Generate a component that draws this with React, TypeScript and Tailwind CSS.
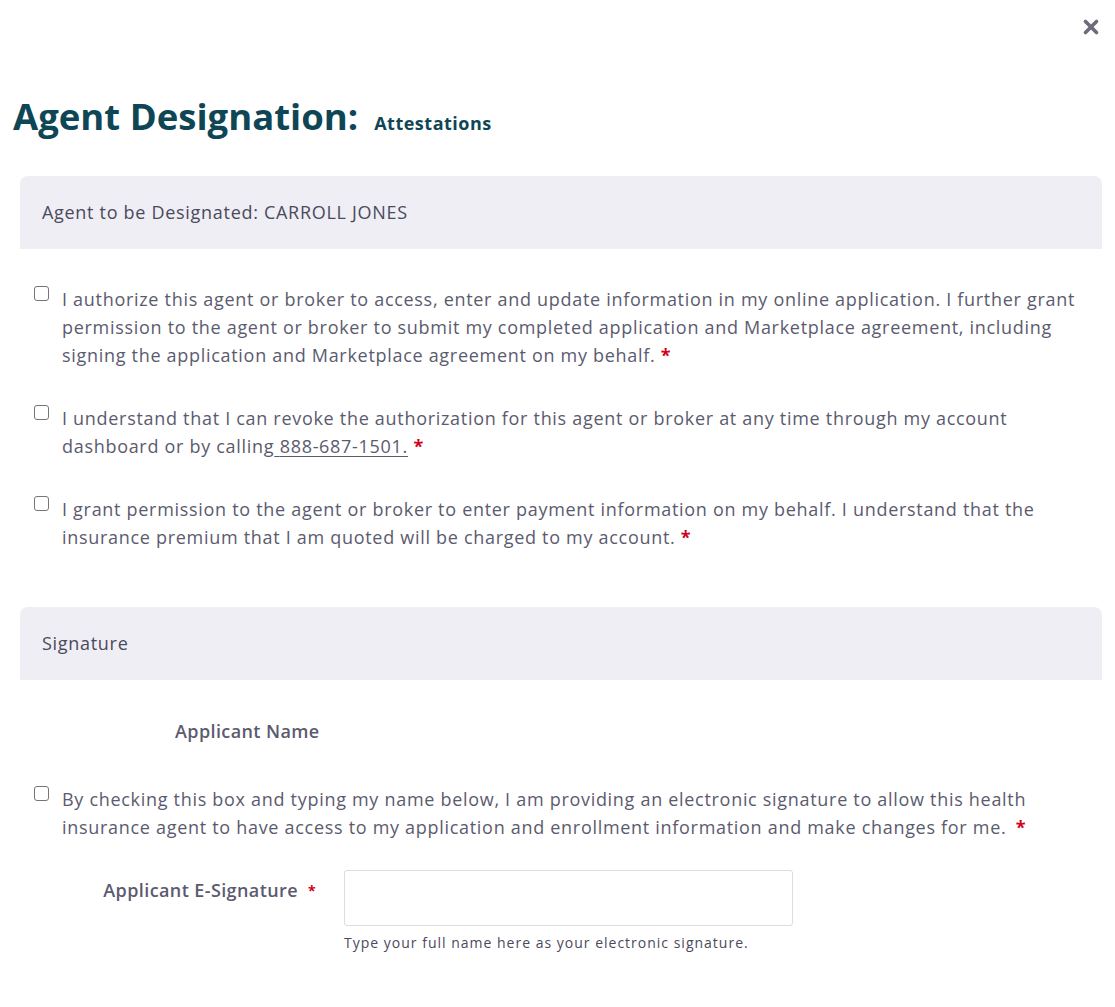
import { X } from "lucide-react";

const font = { fontFamily: '"Open Sans", "Noto Sans", sans-serif' };

function Req({ className = "" }: { className?: string }) {
  return <span className={`text-[#d0021b] font-bold ${className}`}>*</span>;
}

function Box() {
  return (
    <span className="mt-[1px] h-[15px] w-[15px] shrink-0 rounded-[3px] border-[1.5px] border-[#757575] bg-white" />
  );
}

function CheckRow({ children }: { children: React.ReactNode }) {
  return (
    <label className="flex gap-[13px] pl-[34px]">
      <Box />
      <span className="whitespace-nowrap text-[18px] leading-[28px] tracking-[0.7px] text-[#5b5b6f]">{children}</span>
    </label>
  );
}

function PanelHeader({ children }: { children: React.ReactNode }) {
  return (
    <div className="ml-[20px] mr-[13px] flex h-[73px] items-center rounded-t-[8px] bg-[#efeef5] px-[22px] text-[18px] tracking-[0.7px] text-[#4a4a5c]">
      {children}
    </div>
  );
}

export default function App() {
  return (
    <div className="relative h-[1007px] w-[1115px] overflow-hidden bg-white" style={font}>
      <button className="absolute right-[13px] top-[16px] text-[#6c6c7c]" title="Close">
        <X className="h-[22px] w-[22px]" strokeWidth={4} />
      </button>

      <h1 className="flex items-baseline gap-[16px] pl-[13px] pt-[94px] text-[#0e4656]">
        <span className="text-[36.5px] font-bold leading-[44px]">Agent Designation:</span>
        <span className="text-[18px] font-bold tracking-[0.5px]">Attestations</span>
      </h1>

      <div className="mt-[38px]">
        <PanelHeader>Agent to be Designated: CARROLL JONES</PanelHeader>
      </div>

      <div className="mt-[36px] flex flex-col gap-[35px]">
        <CheckRow>
          I authorize this agent or broker to access, enter and update information in my online application. I further grant
          <br />
          permission to the agent or broker to submit my completed application and Marketplace agreement, including
          <br />
          signing the application and Marketplace agreement on my behalf. <Req />
        </CheckRow>
        <CheckRow>
          I understand that I can revoke the authorization for this agent or broker at any time through my account
          <br />
          dashboard or by calling
          <a className="underline underline-offset-[3px]" href="#">
            {" "}888-687-1501.
          </a>{" "}
          <Req />
        </CheckRow>
        <CheckRow>
          I grant permission to the agent or broker to enter payment information on my behalf. I understand that the
          <br />
          insurance premium that I am quoted will be charged to my account. <Req />
        </CheckRow>
      </div>

      <div className="mt-[56px]">
        <PanelHeader>Signature</PanelHeader>
      </div>

      <div className="mt-[38px] pl-[175px] text-[18px] font-semibold tracking-[0.4px] text-[#5b5b6f]">Applicant Name</div>

      <div className="mt-[40px]">
        <CheckRow>
          By checking this box and typing my name below, I am providing an electronic signature to allow this health
          <br />
          insurance agent to have access to my application and enrollment information and make changes for me.{" "}
          <Req className="ml-[4px]" />
        </CheckRow>
      </div>

      <div className="mt-[29px] flex items-start">
        <label className="flex w-[344px] items-center justify-end gap-[10px] pr-[28px] pt-[7px] text-[18px] font-semibold tracking-[0.4px] text-[#5b5b6f]">
          Applicant E-Signature <Req className="text-[14px]" />
        </label>
        <div className="flex flex-col">
          <input className="h-[56px] w-[449px] rounded-[3px] border border-[#dcdce4] bg-white px-3 outline-none" />
          <span className="mt-[6px] text-[14px] tracking-[1px] text-[#4a4a5c]">Type your full name here as your electronic signature.</span>
        </div>
      </div>
    </div>
  );
}
